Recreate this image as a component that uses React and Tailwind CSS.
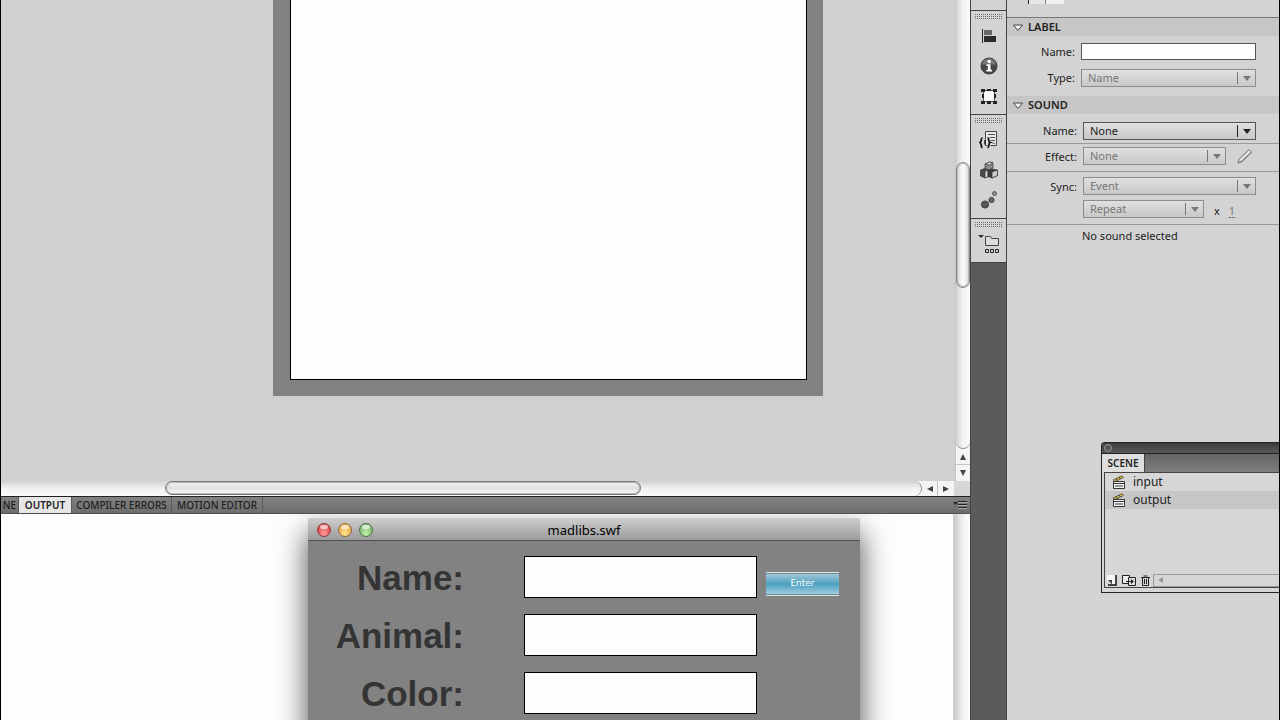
import React, { useState } from 'react';

const Triangle = ({ points, className }) => (
  <svg viewBox="0 0 8 8" className={className} aria-hidden="true">
    <polygon points={points} fill="currentColor" />
  </svg>
);

const Stage = () => (
  <div className="ml-[272px] flex h-[396px] w-[550px] shrink-0 bg-[#828282] pr-4 pb-4 pl-[17px]">
    <div className="flex-1 border border-t-0 border-black bg-[#fefdfe]" />
  </div>
);

const VerticalScrollbar = () => (
  <div className="flex w-[15px] shrink-0 flex-col border-l border-[#c4c4c4] bg-[#f4f4f4]">
    <div className="flex-1 rounded-b-full border-b border-[#8e8e8e] bg-linear-to-r from-[#d2d2d2] via-[#f4f4f4] to-[#fafafa]">
      <div className="mt-[162px] h-[126px] rounded-full border border-[#888] bg-linear-to-r from-[#d6d6d6] via-[#fdfdfd] to-[#dedede] shadow-[inset_0_0_1px_1px_#b4b4b4]" />
    </div>
    <button type="button" aria-label="Scroll up" className="flex h-4 items-center justify-center border-b border-[#c4c4c4] text-[#444]">
      <Triangle points="4,1 7,7 1,7" className="size-2" />
    </button>
    <button type="button" aria-label="Scroll down" className="flex h-4 items-center justify-center text-[#444]">
      <Triangle points="4,7 7,1 1,1" className="size-2" />
    </button>
  </div>
);

const HorizontalScrollbar = () => (
  <div className="flex h-[15px] shrink-0 bg-[#f4f4f4]">
    <div className="flex-1 rounded-r-full border-r border-[#8e8e8e] bg-linear-to-b from-[#d2d2d2] via-[#f1f1f1] to-[#fafafa]">
      <div className="ml-[164px] h-[14px] w-[476px] rounded-full border border-[#777] bg-linear-to-b from-[#f6f6f6] via-[#e0e0e0] to-[#fdfdfd] shadow-[inset_0_0_1px_1px_#b4b4b4]" />
    </div>
    <button type="button" aria-label="Scroll left" className="flex w-4 items-center justify-center border-r border-[#c4c4c4] text-[#444]">
      <Triangle points="1,4 7,1 7,7" className="size-2" />
    </button>
    <button type="button" aria-label="Scroll right" className="flex w-4 items-center justify-center text-[#444]">
      <Triangle points="7,4 1,1 1,7" className="size-2" />
    </button>
    <div className="w-4 bg-[#d6d6d6]" />
  </div>
);

const tabs = [
  { id: 'timeline', label: 'NE', className: 'w-[18px]' },
  { id: 'output', label: 'OUTPUT', className: 'w-[53px]' },
  { id: 'compiler', label: 'COMPILER ERRORS', className: 'w-[100px]' },
  { id: 'motion', label: 'MOTION EDITOR', className: 'w-[91px]' },
];

const OutputTabs = () => {
  const [active, setActive] = useState('output');

  return (
    <div className="flex h-[18px] shrink-0 border-t border-b border-t-[#222] border-b-[#505050] bg-linear-to-b from-[#818181] to-[#6d6d6d]">
      {tabs.map((tab) => (
        <button
          key={tab.id}
          type="button"
          onClick={() => setActive(tab.id)}
          className={`flex shrink-0 items-center justify-center border-r border-[#5a5a5a] text-[10px] whitespace-nowrap ${tab.className} ${
            active === tab.id ? 'bg-[#e6e6e6] font-semibold text-[#222]' : 'font-medium text-[#1e1e1e]'
          }`}
        >
          {tab.label}
        </button>
      ))}
      <button type="button" aria-label="Panel menu" className="ml-auto pr-[3px] text-[#222]">
        <svg viewBox="0 0 14 10" className="h-[10px] w-[14px]">
          <path d="M0 2h5L2.500 5z" fill="currentColor" />
          <path d="M5 1.500h9M5 4.500h9M5 7.500h9" stroke="currentColor" />
          <path d="M5 2.500h9M5 5.500h9M5 8.500h9" stroke="#aaa" />
        </svg>
      </button>
    </div>
  );
};

const WindowLight = ({ label, className }) => (
  <button
    type="button"
    aria-label={label}
    className={`flex size-[14px] justify-center rounded-full border pt-px ${className}`}
  >
    <span className="h-1 w-2 rounded-full bg-white/60" />
  </button>
);

const fields = [
  { id: 'name', label: 'Name:' },
  { id: 'animal', label: 'Animal:' },
  { id: 'color', label: 'Color:' },
];

const MadlibsWindow = () => (
  <section className="absolute top-1 left-[307px] w-[552px] rounded-t-[4px] bg-[#828282] pb-10 shadow-[0_14px_30px_rgba(0,0,0,0.7)]">
    <header className="flex h-[23px] items-center rounded-t-[4px] border-b border-[#505050] bg-linear-to-b from-[#cecece] to-[#9c9c9c] px-[9px]">
      <div className="flex w-[60px] gap-[7px] pt-[2px]">
        <WindowLight label="Close" className="border-[#8c3a3e] bg-radial-[at_50%_80%] from-[#ff9c98] to-[#cf343c]" />
        <WindowLight label="Minimize" className="border-[#94683a] bg-radial-[at_50%_80%] from-[#ffe794] to-[#e09a3c]" />
        <WindowLight label="Zoom" className="border-[#4b7443] bg-radial-[at_50%_80%] from-[#c4f0ac] to-[#66a95c]" />
      </div>
      <h1 className="flex-1 pt-[2px] pr-[60px] text-center text-[13px] leading-5 text-black">madlibs.swf</h1>
    </header>
    <form className="flex items-start gap-[9px] pt-[15px] pl-4" onSubmit={(e) => e.preventDefault()}>
      <div className="flex flex-col gap-4">
        {fields.map((field) => (
          <div key={field.id} className="flex items-center gap-[60px]">
            <label
              htmlFor={field.id}
              className="w-[140px] pt-[2px] text-right font-['Liberation_Sans'] text-[35px] leading-9 font-bold text-[#343434]"
            >
              {field.label}
            </label>
            <input id={field.id} type="text" className="h-[42px] w-[233px] border border-black bg-[#fefdfe] px-2 text-xl" />
          </div>
        ))}
      </div>
      <button
        type="submit"
        className="mt-4 h-6 w-[73px] border-y border-[#d9e6ea] bg-linear-to-b from-[#a9cbd7] via-[#4ba0c2] to-[#a5d0de] font-['DejaVu_Sans'] text-[9px] text-white shadow-[inset_0_1px_0_#6d8a94,inset_0_-1px_0_#6d8a94]"
      >
        Enter
      </button>
    </form>
  </section>
);

const OutputPanel = () => (
  <div className="flex h-[224px] shrink-0 flex-col">
    <OutputTabs />
    <div className="relative flex flex-1 justify-end overflow-hidden bg-[#fefdfe]">
      <MadlibsWindow />
      <div className="w-[17px] border-l border-[#cfcfcf] bg-linear-to-r from-[#c8c8c8] via-[#efefef] to-white" />
    </div>
  </div>
);

const Grip = () => (
  <svg viewBox="0 0 27 5" className="mx-auto mb-[2px] h-[5px] w-[27px]" stroke="#6e6e6e" strokeDasharray="1 1">
    <path d="M0 .5h27M0 2.500h27M0 4.500h27" />
  </svg>
);

const AlignIcon = () => (
  <svg viewBox="0 0 20 20" className="size-5">
    <path d="M3.500 3v14" stroke="#222" />
    <rect x="5" y="4" width="8" height="5" fill="#666" />
    <rect x="5" y="10" width="12" height="6" fill="#2c2c2c" />
  </svg>
);

const InfoIcon = () => (
  <svg viewBox="0 0 20 20" className="size-5">
    <circle cx="10" cy="10" r="8" fill="#484848" stroke="#3a3a3a" />
    <path d="M3 8.500a7 6 0 0 1 14 0" fill="#777" />
    <circle cx="10.200" cy="5.500" r="1.700" fill="#fff" />
    <path d="M7.500 8.200h4v5.600h1.500v1.700H7.300v-1.700h1.600V9.900H7.500z" fill="#fff" />
  </svg>
);

const TransformIcon = () => (
  <svg viewBox="0 0 20 20" className="size-5">
    <rect x="4.500" y="4.500" width="11" height="11" fill="#f8f8f8" stroke="#555" />
    <path
      d="M2 3h4v3H2zM8 3h4v2H8zM14 3h4v3h-4zM2 15h4v3H2zM8 15h4v3H8zM14 15h4v3h-4zM3 8h2v4H3zM15 8h2v4h-2z"
      fill="#222"
    />
  </svg>
);

const SnippetsIcon = () => (
  <svg viewBox="0 0 20 20" className="size-5">
    <path d="M6.500 1.500h11v14h-11z" fill="#e8e8e8" stroke="#444" />
    <path d="M9 4.500h7M9 7.500h7M11 10.500h5M12 13.500h4" stroke="#555" />
    <path d="M3.500 8c-2 0-.6 4-2.500 4.500 1.900.5.5 5 2.500 5M8.500 8c2 0 .6 4 2.500 4.500-1.900.5-.5 5-2.500 5" fill="none" stroke="#dcdcdc" strokeWidth="3.500" />
    <path d="M3.500 8c-2 0-.6 4-2.500 4.500 1.900.5.5 5 2.500 5M8.500 8c2 0 .6 4 2.500 4.500-1.900.5-.5 5-2.500 5" fill="none" stroke="#111" strokeWidth="1.800" />
    <path d="M6 10v4.500" stroke="#222" strokeWidth="1.500" />
  </svg>
);

const ComponentsIcon = () => (
  <svg viewBox="0 0 20 20" className="size-5" stroke="#333" strokeWidth="0.700">
    <path d="M6 4l5-2 3 1v5l-4 2-4-1z" fill="#8a8a8a" />
    <path d="M6 4l5-2 3 1-4 2z" fill="#e2e2e2" />
    <path d="M1.500 10l4-1.500L9 10v6.500L6 18l-4.500-2z" fill="#4a4a4a" />
    <path d="M6 11.500L9 10v6.500L6 18z" fill="#ddd" />
    <path d="M9 10.500l4-1.500 5.500 1v5.500L13 18l-4-1.500z" fill="#3c3c3c" />
    <path d="M13 12l5.500-2v5.500L13 18z" fill="#ccc" />
  </svg>
);

const MotionIcon = () => (
  <svg viewBox="0 0 20 20" className="size-5" stroke="#444">
    <circle cx="6" cy="14.500" r="3.600" fill="#555" />
    <circle cx="12.500" cy="10" r="2.600" fill="#666" />
    <circle cx="15.500" cy="3.500" r="1.900" fill="#999" />
  </svg>
);

const ProjectIcon = () => (
  <svg viewBox="0 0 22 20" className="h-5 w-[22px]" fill="none" stroke="#444">
    <path d="M0 1h6L3 4z" fill="#333" stroke="none" />
    <path d="M7.500 11.500v-9h5l1 2h7v7z" fill="#dedede" />
    <path d="M7.500 15.500h3v3h-3zM12.500 15.500h3v3h-3zM17.500 15.500h3v3h-3z" stroke="#222" />
  </svg>
);

const dockGroups = [
  [
    { label: 'Align', Icon: AlignIcon },
    { label: 'Info', Icon: InfoIcon },
    { label: 'Transform', Icon: TransformIcon },
  ],
  [
    { label: 'Code Snippets', Icon: SnippetsIcon },
    { label: 'Components', Icon: ComponentsIcon },
    { label: 'Motion Presets', Icon: MotionIcon },
  ],
  [{ label: 'Project', Icon: ProjectIcon }],
];

const IconDock = () => (
  <nav className="w-[37px] shrink-0 border-x border-[#444] bg-[#5b5b5b]">
    <div className="h-[11px] border-b border-[#444] bg-[#d3d3d3]" />
    {dockGroups.map((group) => (
      <div key={group[0].label} className="border-b border-[#444] bg-[#d3d3d3] py-[3px]">
        <Grip />
        {group.map(({ label, Icon }) => (
          <button key={label} type="button" aria-label={label} className="flex h-[30px] w-full items-center justify-center">
            <Icon />
          </button>
        ))}
      </div>
    ))}
  </nav>
);

const SectionHeader = ({ children }) => (
  <h2 className="flex h-[18px] items-center gap-1 bg-[#c6c6c6] pl-[5px] text-[11px] leading-4 font-semibold text-[#222]">
    <svg viewBox="0 0 12 8" className="mt-px h-2 w-3">
      <path d="M1.500 1h9L6 6.500z" fill="#f4f4f4" stroke="#444" />
    </svg>
    {children}
  </h2>
);

const Dropdown = ({ id, option, disabled, className }) => (
  <div
    className={`grid h-[18px] border bg-linear-to-b from-[#e0e0e0] to-[#c8c8c8] ${
      disabled ? 'border-[#8c8c8c] text-[#777]' : 'border-[#555] text-[#222]'
    } ${className}`}
  >
    <select
      id={id}
      disabled={disabled}
      className="col-start-1 row-start-1 appearance-none pl-[6px] text-[11px] leading-4 opacity-100"
    >
      <option>{option}</option>
    </select>
    <span className="pointer-events-none col-start-1 row-start-1 my-[2px] flex w-[18px] items-center justify-center justify-self-end border-l border-current">
      <Triangle points="0,2 8,2 4,7" className="size-2" />
    </span>
  </div>
);

const PropertyLabel = ({ htmlFor, className, children }) => (
  <label htmlFor={htmlFor} className={`text-right text-[11px] leading-4 text-[#222] ${className}`}>
    {children}
  </label>
);

const LabelSection = () => (
  <section className="border-t border-[#777]">
    <SectionHeader>LABEL</SectionHeader>
    <div className="flex flex-col gap-[9px] pt-[7px] pb-[9px]">
      <div className="flex items-center gap-[6px]">
        <PropertyLabel htmlFor="label-name" className="w-[68px]">Name:</PropertyLabel>
        <input id="label-name" type="text" className="h-[17px] w-[175px] border border-[#555] bg-white px-1 text-[11px]" />
      </div>
      <div className="flex items-center gap-[6px]">
        <PropertyLabel htmlFor="label-type" className="w-[68px]">Type:</PropertyLabel>
        <Dropdown id="label-type" option="Name" disabled className="w-[175px]" />
      </div>
    </div>
  </section>
);

const SoundSection = () => (
  <section>
    <SectionHeader>SOUND</SectionHeader>
    <div className="flex items-center gap-[6px] border-b border-[#999] pt-2 pb-[3px]">
      <PropertyLabel htmlFor="sound-name" className="w-[70px]">Name:</PropertyLabel>
      <Dropdown id="sound-name" option="None" className="w-[173px]" />
    </div>
    <div className="flex items-center gap-[6px] border-b border-[#999] pt-[3px] pb-[6px]">
      <PropertyLabel htmlFor="sound-effect" className="w-[70px] pt-[2px]">Effect:</PropertyLabel>
      <Dropdown id="sound-effect" option="None" disabled className="w-[143px]" />
      <button type="button" aria-label="Edit sound envelope" className="ml-1">
        <svg viewBox="0 0 18 18" className="size-[18px]">
          <path d="M2 16l1-4L13 2.500l3 2.500L6 14.500z" fill="#b4b4b4" stroke="#8c8c8c" />
          <path d="M4 13.500L14 4" stroke="#f2f2f2" strokeWidth="1.500" />
          <path d="M2 16l4-1.500L16 5" fill="none" stroke="#777" />
        </svg>
      </button>
    </div>
    <div className="flex flex-col gap-[5px] border-b border-[#999] pt-[5px] pb-[6px]">
      <div className="flex items-center gap-[6px]">
        <PropertyLabel htmlFor="sound-sync" className="w-[70px] pt-[2px]">Sync:</PropertyLabel>
        <Dropdown id="sound-sync" option="Event" disabled className="w-[173px]" />
      </div>
      <div className="flex h-[18px] items-center pl-[76px]">
        <Dropdown id="sound-repeat" option="Repeat" disabled className="w-[121px]" />
        <label htmlFor="sound-repeat" className="pt-1 pl-[10px] text-[11px] leading-4 text-[#222]">x</label>
        <span className="mt-[5px] ml-[9px] border-b border-dotted border-[#555] text-[11px] leading-3 text-[#777]">1</span>
      </div>
    </div>
    <p className="pt-[3px] pl-[75px] text-[11px] leading-4 text-[#222]">No sound selected</p>
  </section>
);

const ClapperIcon = () => (
  <svg viewBox="0 0 14 14" className="size-[14px]">
    <path d="M1 5L10 0.800l1.500 1.700L3 6.500z" fill="#e0c34c" stroke="#4c4630" strokeWidth="0.800" />
    <path d="M4 3.500l1.500 2M7 2.200l1.500 1.800" stroke="#333" />
    <path d="M1.500 6.500h11v7h-11z" fill="#f4f4f4" stroke="#333" />
    <path d="M1.500 8.500h11M3 11h8" stroke="#333" />
  </svg>
);

const ScenePanel = () => {
  const [selected, setSelected] = useState('output');

  return (
    <section className="absolute top-[442px] right-0 left-[94px] rounded-tl-[4px] border border-r-0 border-[#222] bg-[#d6d6d6]">
      <header className="flex h-[11px] items-center rounded-tl-[3px] border-b border-[#222] bg-linear-to-b from-[#3c3c3c] to-[#585858] pl-[2px]">
        <button type="button" aria-label="Close scene panel" className="size-2 rounded-full border border-[#999] bg-[#555]" />
      </header>
      <div className="flex h-[18px] bg-linear-to-b from-[#656565] to-[#7e7e7e]">
        <h2 className="flex w-[43px] items-center justify-center border-r border-[#444] bg-[#dedede] text-[10px] font-semibold text-[#222]">SCENE</h2>
      </div>
      <div className="mb-1 ml-[2px] border border-r-0 border-[#444]">
        <ul className="h-[100px]">
          {['input', 'output'].map((scene) => (
            <li key={scene}>
              <button
                type="button"
                onClick={() => setSelected(scene)}
                className={`flex h-[18px] w-full items-center gap-[7px] pl-[7px] text-[12px] leading-4 text-[#222] ${
                  selected === scene ? 'bg-[#c6c6c6]' : ''
                }`}
              >
                <ClapperIcon />
                {scene}
              </button>
            </li>
          ))}
        </ul>
        <div className="flex h-[14px] items-center">
          <button type="button" aria-label="Add scene" className="ml-[2px]">
            <svg viewBox="0 0 10 11" className="h-[11px] w-[10px]">
              <path d="M0 0h9v10H5L0 5z" fill="#f6f6f6" />
              <path d="M9 0v10H1" fill="none" stroke="#111" strokeWidth="1.500" />
              <path d="M1 5l4 4.500V5z" fill="#444" />
            </svg>
          </button>
          <button type="button" aria-label="Duplicate scene" className="ml-[5px]">
            <svg viewBox="0 0 14 11" className="h-[11px] w-[14px]" fill="none" stroke="#222">
              <path d="M.5.500h7v8h-7z" fill="#eee" />
              <path d="M6.500 2.500h7v8h-7z" fill="#ddd" />
              <path d="M4 6.500h6" />
              <path d="M9 4l3 2.500L9 9z" fill="#222" stroke="none" />
            </svg>
          </button>
          <button type="button" aria-label="Delete scene" className="ml-[5px]">
            <svg viewBox="0 0 9 11" className="h-[11px] w-[9px]" fill="none" stroke="#222">
              <path d="M0 2.500h9M2.500 1h4M1.500 3v7.500h6V3M3.500 4v5M5.500 4v5" />
            </svg>
          </button>
          <div className="ml-[3px] flex h-[13px] flex-1 items-center border border-r-0 border-[#999] pl-[3px] text-[#999]">
            <Triangle points="1,4 6,1 6,7" className="size-2" />
          </div>
        </div>
      </div>
    </section>
  );
};

const PropertiesPanel = () => (
  <aside className="relative w-[272px] shrink-0 bg-[#d3d3d3]">
    <div className="flex h-[17px] pl-[21px]">
      <div className="h-1 w-[18px] border-x border-l-[#222] border-r-[#777] bg-[#e6e6e6]" />
      <div className="h-1 w-[18px] bg-[#f0f0f0]" />
    </div>
    <LabelSection />
    <SoundSection />
    <ScenePanel />
  </aside>
);

const App = () => (
  <div className="flex h-screen overflow-hidden border-x border-black bg-[#d0d0d0] font-['Noto_Sans','Open_Sans',sans-serif]">
    <main className="flex min-w-0 flex-1 flex-col">
      <div className="flex min-h-0 flex-1 flex-col">
        <div className="flex min-h-0 flex-1">
          <div className="min-w-0 flex-1 overflow-hidden">
            <Stage />
          </div>
          <VerticalScrollbar />
        </div>
        <HorizontalScrollbar />
      </div>
      <OutputPanel />
    </main>
    <IconDock />
    <PropertiesPanel />
  </div>
);

export default App;
